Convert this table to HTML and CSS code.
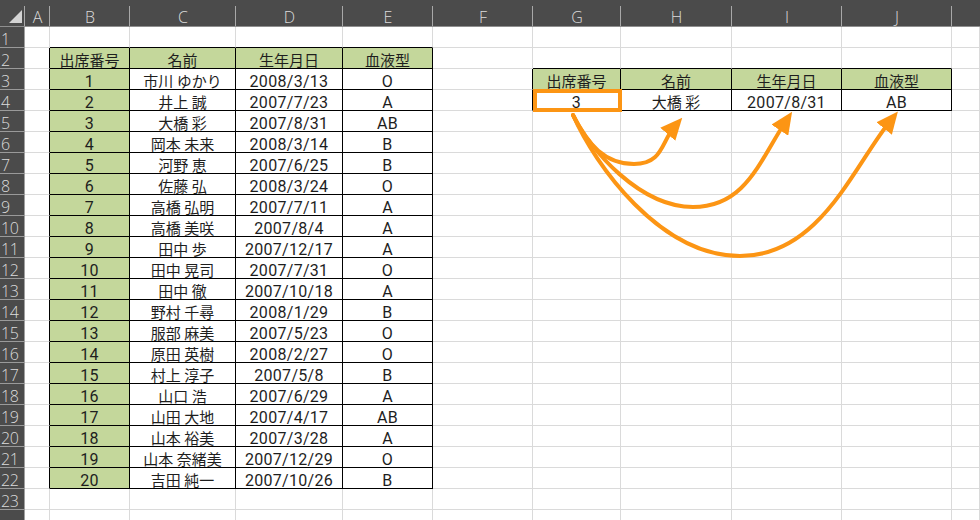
FILE: index.html
```html
<!DOCTYPE html>
<html lang="ja">
<head>
<meta charset="utf-8">
<title>出席番号</title>
<link rel="stylesheet" href="styles.css">
</head>
<body>
<div class="wrap">
<div class="sheet">
<div class="corner"><svg class="tri" width="25" height="27" viewBox="0 0 25 27"><polygon points="22,10 22,23 9,23" fill="#d4d4d4"/></svg></div>
<div class="ch">A</div><div class="ch">B</div><div class="ch">C</div><div class="ch">D</div><div class="ch">E</div><div class="ch">F</div><div class="ch">G</div><div class="ch">H</div><div class="ch">I</div><div class="ch">J</div><div class="ch last"></div>

<div class="rh">1</div><div class="c"></div><div class="c bb"></div><div class="c bb"></div><div class="c bb"></div><div class="c bb"></div><div class="c"></div><div class="c"></div><div class="c"></div><div class="c"></div><div class="c"></div><div class="c"></div>

<div class="rh">2</div><div class="c br"></div><div class="hd">出席番号</div><div class="hd">名前</div><div class="hd">生年月日</div><div class="hd">血液型</div><div class="c"></div><div class="c bb"></div><div class="c bb"></div><div class="c bb"></div><div class="c bb"></div><div class="c"></div>

<div class="rh">3</div><div class="c br"></div><div class="g num">1</div><div class="w">市川 ゆかり</div><div class="w num">2008/3/13</div><div class="w num">O</div><div class="c br"></div><div class="hd">出席番号</div><div class="hd">名前</div><div class="hd">生年月日</div><div class="hd">血液型</div><div class="c"></div>

<div class="rh">4</div><div class="c br"></div><div class="g num">2</div><div class="w">井上 誠</div><div class="w num">2007/7/23</div><div class="w num">A</div><div class="c br"></div><div class="w num sel">3</div><div class="w">大橋 彩</div><div class="w num">2007/8/31</div><div class="w num">AB</div><div class="c"></div>

<div class="rh">5</div><div class="c br"></div><div class="g num">3</div><div class="w">大橋 彩</div><div class="w num">2007/8/31</div><div class="w num">AB</div><div class="c"></div><div class="c"></div><div class="c"></div><div class="c"></div><div class="c"></div><div class="c"></div>

<div class="rh">6</div><div class="c br"></div><div class="g num">4</div><div class="w">岡本 未来</div><div class="w num">2008/3/14</div><div class="w num">B</div><div class="c"></div><div class="c"></div><div class="c"></div><div class="c"></div><div class="c"></div><div class="c"></div>

<div class="rh">7</div><div class="c br"></div><div class="g num">5</div><div class="w">河野 恵</div><div class="w num">2007/6/25</div><div class="w num">B</div><div class="c"></div><div class="c"></div><div class="c"></div><div class="c"></div><div class="c"></div><div class="c"></div>

<div class="rh">8</div><div class="c br"></div><div class="g num">6</div><div class="w">佐藤 弘</div><div class="w num">2008/3/24</div><div class="w num">O</div><div class="c"></div><div class="c"></div><div class="c"></div><div class="c"></div><div class="c"></div><div class="c"></div>

<div class="rh">9</div><div class="c br"></div><div class="g num">7</div><div class="w">高橋 弘明</div><div class="w num">2007/7/11</div><div class="w num">A</div><div class="c"></div><div class="c"></div><div class="c"></div><div class="c"></div><div class="c"></div><div class="c"></div>

<div class="rh">10</div><div class="c br"></div><div class="g num">8</div><div class="w">高橋 美咲</div><div class="w num">2007/8/4</div><div class="w num">A</div><div class="c"></div><div class="c"></div><div class="c"></div><div class="c"></div><div class="c"></div><div class="c"></div>

<div class="rh">11</div><div class="c br"></div><div class="g num">9</div><div class="w">田中 歩</div><div class="w num">2007/12/17</div><div class="w num">A</div><div class="c"></div><div class="c"></div><div class="c"></div><div class="c"></div><div class="c"></div><div class="c"></div>

<div class="rh">12</div><div class="c br"></div><div class="g num">10</div><div class="w">田中 晃司</div><div class="w num">2007/7/31</div><div class="w num">O</div><div class="c"></div><div class="c"></div><div class="c"></div><div class="c"></div><div class="c"></div><div class="c"></div>

<div class="rh">13</div><div class="c br"></div><div class="g num">11</div><div class="w">田中 徹</div><div class="w num">2007/10/18</div><div class="w num">A</div><div class="c"></div><div class="c"></div><div class="c"></div><div class="c"></div><div class="c"></div><div class="c"></div>

<div class="rh">14</div><div class="c br"></div><div class="g num">12</div><div class="w">野村 千尋</div><div class="w num">2008/1/29</div><div class="w num">B</div><div class="c"></div><div class="c"></div><div class="c"></div><div class="c"></div><div class="c"></div><div class="c"></div>

<div class="rh">15</div><div class="c br"></div><div class="g num">13</div><div class="w">服部 麻美</div><div class="w num">2007/5/23</div><div class="w num">O</div><div class="c"></div><div class="c"></div><div class="c"></div><div class="c"></div><div class="c"></div><div class="c"></div>

<div class="rh">16</div><div class="c br"></div><div class="g num">14</div><div class="w">原田 英樹</div><div class="w num">2008/2/27</div><div class="w num">O</div><div class="c"></div><div class="c"></div><div class="c"></div><div class="c"></div><div class="c"></div><div class="c"></div>

<div class="rh">17</div><div class="c br"></div><div class="g num">15</div><div class="w">村上 淳子</div><div class="w num">2007/5/8</div><div class="w num">B</div><div class="c"></div><div class="c"></div><div class="c"></div><div class="c"></div><div class="c"></div><div class="c"></div>

<div class="rh">18</div><div class="c br"></div><div class="g num">16</div><div class="w">山口 浩</div><div class="w num">2007/6/29</div><div class="w num">A</div><div class="c"></div><div class="c"></div><div class="c"></div><div class="c"></div><div class="c"></div><div class="c"></div>

<div class="rh">19</div><div class="c br"></div><div class="g num">17</div><div class="w">山田 大地</div><div class="w num">2007/4/17</div><div class="w num">AB</div><div class="c"></div><div class="c"></div><div class="c"></div><div class="c"></div><div class="c"></div><div class="c"></div>

<div class="rh">20</div><div class="c br"></div><div class="g num">18</div><div class="w">山本 裕美</div><div class="w num">2007/3/28</div><div class="w num">A</div><div class="c"></div><div class="c"></div><div class="c"></div><div class="c"></div><div class="c"></div><div class="c"></div>

<div class="rh">21</div><div class="c br"></div><div class="g num">19</div><div class="w">山本 奈緒美</div><div class="w num">2007/12/29</div><div class="w num">O</div><div class="c"></div><div class="c"></div><div class="c"></div><div class="c"></div><div class="c"></div><div class="c"></div>

<div class="rh">22</div><div class="c br"></div><div class="g num">20</div><div class="w">吉田 純一</div><div class="w num">2007/10/26</div><div class="w num">B</div><div class="c"></div><div class="c"></div><div class="c"></div><div class="c"></div><div class="c"></div><div class="c"></div>

<div class="rh">23</div><div class="c"></div><div class="c"></div><div class="c"></div><div class="c"></div><div class="c"></div><div class="c"></div><div class="c"></div><div class="c"></div><div class="c"></div><div class="c"></div><div class="c"></div>

<div class="rh"></div><div class="c"></div><div class="c"></div><div class="c"></div><div class="c"></div><div class="c"></div><div class="c"></div><div class="c"></div><div class="c"></div><div class="c"></div><div class="c"></div><div class="c"></div>
</div>

<svg class="arrows" width="980" height="520" viewBox="0 0 980 520">
  <defs>
    <marker id="ah" markerUnits="userSpaceOnUse" markerWidth="22" markerHeight="20" viewBox="0 0 22 20" refX="11" refY="10" orient="auto">
      <path d="M0,0 L22,10 L0,20 Z" fill="#fc9514"/>
    </marker>
  </defs>
  <g fill="none" stroke="#fc9514" stroke-width="4" stroke-linecap="round">
    <path d="M573,115 C588,145 605,164 634,164 S661,142 675,126" marker-end="url(#ah)"/>
    <path d="M573,115 C590,150 640,207 693,207 S760,160 786,121" marker-end="url(#ah)"/>
    <path d="M573,115 C595,165 660,256 740,256 S853,167 891,120" marker-end="url(#ah)"/>
  </g>
</svg>
</div>
</body>
</html>
```

FILE: styles.css
```css
html, body {
  margin: 0;
  padding: 0;
  background: #ffffff;
}

.wrap {
  position: relative;
  width: 980px;
  height: 520px;
  overflow: hidden;
}

.sheet {
  display: grid;
  grid-template-columns: 25px 25px 80px 106px 107px 90px 100px 88px 111px 110px 110px 28px;
  grid-template-rows: 27px repeat(24, 21px);
  width: 980px;
}

.corner,
.ch {
  background: #4b4b4b linear-gradient(#a8a8a8, #a8a8a8) right bottom / 1px 20px no-repeat;
  border-bottom: 1px solid #8f8f8f;
  box-sizing: border-box;
}

.tri {
  display: block;
}

.ch {
  display: flex;
  align-items: center;
  justify-content: center;
  color: #dcdcdc;
  font: 300 16px/18px "Open Sans", "DejaVu Sans", sans-serif;
  padding-top: 8px;
}

.ch.last {
  background: #4b4b4b;
}

.rh {
  background: #4b4b4b;
  color: #dcdcdc;
  font: 300 16px/16px "Open Sans", "DejaVu Sans", sans-serif;
  border-right: 1px solid #a0a0a0;
  border-bottom: 1px solid #9a9a9a;
  box-sizing: border-box;
  display: flex;
  align-items: center;
  padding: 4px 0 0 1px;
  letter-spacing: -0.3px;
}

.c,
.g,
.w,
.hd {
  box-sizing: border-box;
  border-right: 1px solid #dadada;
  border-bottom: 1px solid #dadada;
  display: flex;
  align-items: center;
  justify-content: center;
  font: 15px/18px "Noto Sans CJK JP", "Noto Sans", sans-serif;
  color: #1e1e1e;
  white-space: nowrap;
  padding-top: 4px;
}

.num {
  font: 16px/18px Roboto, "Liberation Sans", sans-serif;
  letter-spacing: 0.3px;
  padding-top: 6px;
}

.g,
.w,
.hd {
  border-right-color: #000;
  border-bottom-color: #000;
}

.g,
.hd {
  background: #c4d79b;
}

.w {
  background: #ffffff;
}

.br {
  border-right-color: #000;
}

.bb {
  border-bottom-color: #000;
}

.sel {
  position: relative;
}

.sel::after {
  content: "";
  position: absolute;
  left: 0;
  top: -1px;
  right: -2px;
  bottom: -2px;
  border: 4px solid #fc9514;
}

.arrows {
  position: absolute;
  left: 0;
  top: 0;
  pointer-events: none;
}
```
